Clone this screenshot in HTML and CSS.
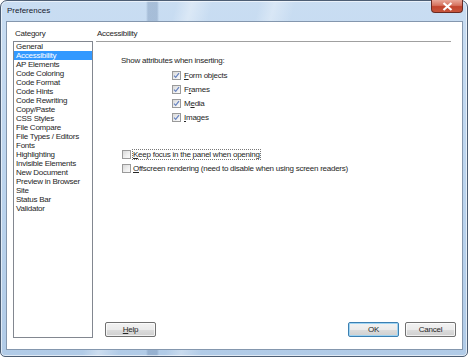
FILE: index.html
```html
<!DOCTYPE html>
<html lang="en">
<head>
    <meta charset="UTF-8">
    <title>Preferences</title>
    <link rel="stylesheet" href="styles.css">
</head>
<body>
    <div class="window">
        <div class="titlebar">
            <span class="title">Preferences</span>
            <span class="close">
                <svg width="11" height="9" viewBox="0 0 11 9">
                    <path d="M1.5 1 L9.5 8 M9.5 1 L1.5 8" stroke="#fff" stroke-width="2.2" fill="none"/>
                </svg>
            </span>
        </div>
        <div class="client">
            <div class="sidebar">
                <div class="label">Category</div>
                <ul class="list">
                    <li>General</li>
                    <li class="selected">Accessibility</li>
                    <li>AP Elements</li>
                    <li>Code Coloring</li>
                    <li>Code Format</li>
                    <li>Code Hints</li>
                    <li>Code Rewriting</li>
                    <li>Copy/Paste</li>
                    <li>CSS Styles</li>
                    <li>File Compare</li>
                    <li>File Types / Editors</li>
                    <li>Fonts</li>
                    <li>Highlighting</li>
                    <li>Invisible Elements</li>
                    <li>New Document</li>
                    <li>Preview in Browser</li>
                    <li>Site</li>
                    <li>Status Bar</li>
                    <li>Validator</li>
                </ul>
            </div>
            <div class="panel">
                <div class="panel-title">Accessibility</div>
                <p class="intro">Show attributes when inserting:</p>
                <div class="checks">
                    <div class="check"><span class="box checked"></span><span><u>F</u>orm objects</span></div>
                    <div class="check"><span class="box checked"></span><span>F<u>r</u>ames</span></div>
                    <div class="check"><span class="box checked"></span><span>M<u>e</u>dia</span></div>
                    <div class="check"><span class="box checked"></span><span><u>I</u>mages</span></div>
                </div>
                <div class="options">
                    <div class="check"><span class="box"></span><span class="focus"><u>K</u>eep focus in the panel when opening</span></div>
                    <div class="check"><span class="box"></span><span><u>O</u>ffscreen rendering (need to disable when using screen readers)</span></div>
                </div>
                <div class="buttons">
                    <button class="btn"><u>H</u>elp</button>
                    <span class="spacer"></span>
                    <button class="btn default">OK</button>
                    <button class="btn">Cancel</button>
                </div>
            </div>
        </div>
    </div>
</body>
</html>
```

FILE: styles.css
```css
body {
    margin: 0;
    font-family: "Liberation Sans", Arial, sans-serif;
    font-size: 8px;
    letter-spacing: -0.25px;
    color: #262626;
}

.window {
    width: 468px;
    height: 357px;
    box-sizing: border-box;
    border: 1px solid #4d5e74;
    border-radius: 7px 7px 5px 5px;
    padding: 0 4px 6px 5px;
    display: flex;
    flex-direction: column;
    background:
        linear-gradient(90deg, rgba(255,255,255,0) 145px, rgba(80,110,150,0.28) 147px, rgba(80,110,150,0.28) 156px, rgba(255,255,255,0) 158px),
        linear-gradient(105deg, rgba(255,255,255,0) 170px, rgba(255,255,255,0.35) 185px, rgba(255,255,255,0) 205px, rgba(255,255,255,0) 250px, rgba(255,255,255,0.3) 265px, rgba(255,255,255,0) 285px),
        linear-gradient(180deg, #c9ddf2 0, #bad3ed 60%, #b1cbe7 100%);
    box-shadow: inset 0 0 0 1px rgba(255,255,255,0.6);
}

.titlebar {
    height: 20px;
    display: flex;
    align-items: flex-start;
}

.title {
    line-height: 19px;
    padding-left: 1px;
    letter-spacing: 0;
    color: #15202e;
}

.close {
    margin-left: auto;
    margin-top: -1px;
    width: 32px;
    height: 13px;
    box-sizing: border-box;
    border: 1px solid #6b2a22;
    border-top: none;
    border-radius: 0 0 4px 4px;
    background: linear-gradient(180deg, #e9a899 0, #d6735f 45%, #c2442d 55%, #c7563d 100%);
    display: flex;
    align-items: center;
    justify-content: center;
}

.close svg {
    display: block;
}

.client {
    flex: 1;
    display: flex;
    background: #fff;
    border: 1px solid #8497ae;
}

.sidebar {
    width: 80px;
    padding: 7px 0 0 6px;
}

.label {
    line-height: 9px;
    padding-left: 2px;
}

.list {
    list-style: none;
    margin: 3px 0 0 0;
    padding: 0;
    width: 80px;
    height: 297px;
    box-sizing: border-box;
    border: 1px solid #828790;
    background: #fff;
}

.list li {
    line-height: 9px;
    height: 9px;
    padding-left: 2px;
    white-space: nowrap;
}

.list li.selected {
    background: #3399ff;
    color: #fff;
}

.panel {
    flex: 1;
    margin-left: 3px;
    padding: 7px 6px 12px 0;
    display: flex;
    flex-direction: column;
}

.panel-title {
    line-height: 9px;
    padding: 0 0 3px 1px;
    margin-right: 5px;
    border-bottom: 1px solid #a0a0a0;
    box-shadow: 0 1px 0 #fff;
}

.intro {
    margin: 14px 0 0 25px;
    line-height: 9px;
}

.checks {
    margin-top: 3px;
    padding-left: 76px;
}

.options {
    margin-top: 23px;
    padding-left: 26px;
}

.check {
    height: 14px;
    display: flex;
    align-items: center;
    gap: 2px;
    white-space: nowrap;
}

.checks .check {
    gap: 3px;
}

.box {
    width: 9px;
    height: 9px;
    box-sizing: border-box;
    border: 1px solid #9a9a9a;
    background: linear-gradient(135deg, #d9d9d9 0, #f0f0f0 60%, #fafafa 100%);
    flex: none;
}

.box.checked {
    background:
        url("data:image/svg+xml;utf8,<svg xmlns='http://www.w3.org/2000/svg' width='7' height='7' viewBox='0 0 7 7'><path d='M1 3.6 L2.7 5.3 L6 1.2' stroke='%236682c0' stroke-width='1.2' fill='none'/></svg>") center / 7px 7px no-repeat,
        linear-gradient(135deg, #d9d9d9 0, #f0f0f0 60%, #fafafa 100%);
}

.focus {
    outline: 1px dotted #777;
    outline-offset: 0;
    line-height: 9px;
}

.buttons {
    margin-top: auto;
    display: flex;
    gap: 6px;
    padding-left: 9px;
}

.spacer {
    flex: 1;
}

.btn {
    width: 51px;
    height: 15px;
    padding: 0;
    font-family: "Liberation Sans", Arial, sans-serif;
    font-size: 8px;
    letter-spacing: -0.25px;
    color: #262626;
    border: 1px solid #707070;
    border-radius: 2px;
    background: linear-gradient(180deg, #f2f2f2 0, #ebebeb 50%, #dddddd 51%, #cfcfcf 100%);
    box-shadow: inset 0 0 0 1px rgba(255,255,255,0.7);
}

.btn.default {
    border-color: #3c7fb1;
    box-shadow: inset 0 0 0 1px #9fd4f3;
}
```
